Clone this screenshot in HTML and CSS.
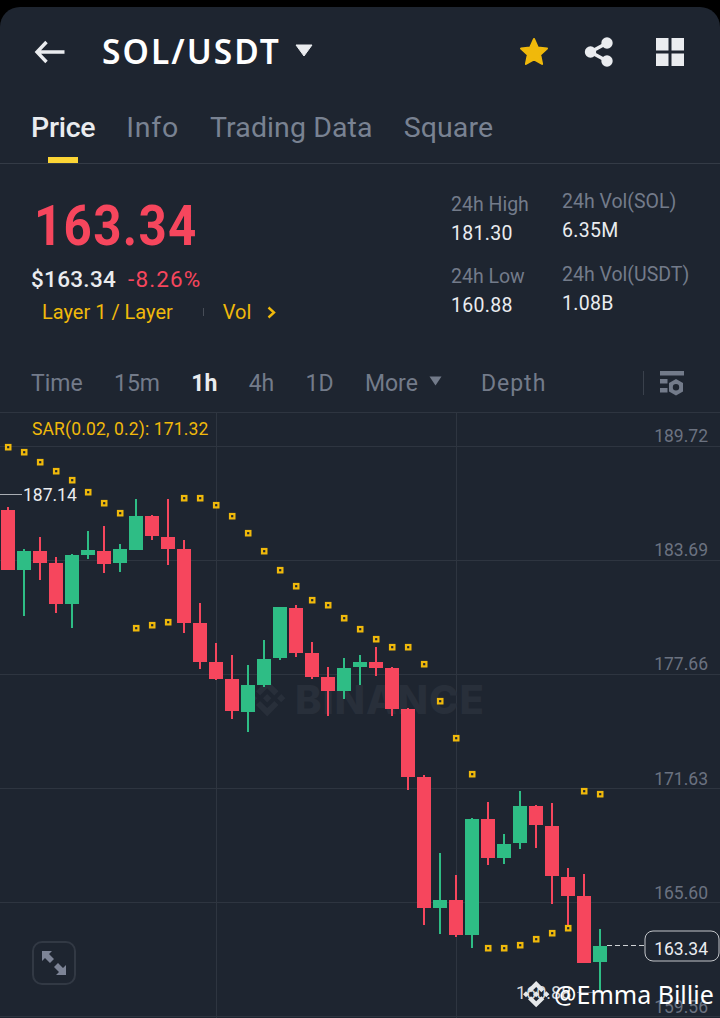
FILE: index.html
```html
<!DOCTYPE html>
<html lang="en">
<head>
<meta charset="utf-8">
<title>SOL/USDT</title>
<link rel="stylesheet" href="styles.css">
</head>
<body>
<main class="app">
  <header class="topbar">
    <svg class="icon-back" viewBox="0 0 32 24"><path d="M30.500 12H4M12.500 2 3 12l9.500 10"/></svg>
    <h1 class="pair">SOL/USDT</h1>
    <svg class="icon-caret" viewBox="0 0 18 13"><path d="M1 1h16L9 12z"/></svg>
    <div class="actions">
      <svg class="icon-star" viewBox="0 0 30 30"><path d="M15 2l3.900 8.600 9.100 1-6.800 6.200 1.900 9.200-8.100-4.700L6.900 27l1.900-9.200L2 11.600l9.100-1z"/></svg>
      <svg class="icon-share" viewBox="0 0 30 30"><path class="share-lines" d="M23 6 6.500 15 23 24"/><circle cx="23" cy="6" r="5.700"/><circle cx="6.500" cy="15" r="5.700"/><circle cx="23" cy="24" r="5.700"/></svg>
      <svg class="icon-grid" viewBox="0 0 28 28"><rect x="0" y="0" width="12.500" height="12.500"/><rect x="15.500" y="0" width="12.500" height="12.500"/><rect x="0" y="15.500" width="12.500" height="12.500"/><rect x="15.500" y="15.500" width="12.500" height="12.500"/></svg>
    </div>
  </header>

  <nav class="tabs">
    <a class="tab tab-active">Price</a>
    <a class="tab tab-info">Info</a>
    <a class="tab">Trading Data</a>
    <a class="tab">Square</a>
  </nav>

  <section class="summary">
    <div class="quote">
      <div class="last">163.34</div>
      <div class="fiat"><span class="fiat-value">$163.34</span><span class="change">-8.26%</span></div>
      <div class="tags">
        <span>Layer 1 / Layer</span>
        <i class="tag-sep"></i>
        <span>Vol</span>
        <svg class="icon-chev" viewBox="0 0 9 13"><path d="M1.500 1.500 7 6.500l-5.500 5"/></svg>
      </div>
    </div>
    <div class="stats">
      <div class="stat-col stat-col-a">
        <div class="stat"><span class="stat-label">24h High</span><span class="stat-value">181.30</span></div>
        <div class="stat"><span class="stat-label">24h Low</span><span class="stat-value">160.88</span></div>
      </div>
      <div class="stat-col stat-col-b">
        <div class="stat"><span class="stat-label">24h Vol(SOL)</span><span class="stat-value">6.35M</span></div>
        <div class="stat"><span class="stat-label">24h Vol(USDT)</span><span class="stat-value">1.08B</span></div>
      </div>
    </div>
  </section>

  <nav class="intervals">
    <span class="int">Time</span>
    <span class="int">15m</span>
    <span class="int int-1h">1h</span>
    <span class="int">4h</span>
    <span class="int">1D</span>
    <span class="int int-more">More</span>
    <svg class="icon-more" viewBox="0 0 13 10"><path d="M.5.500h12L6.500 9.500z"/></svg>
    <span class="int-depth">Depth</span>
    <i class="int-sep"></i>
    <svg class="icon-settings" viewBox="0 0 24 25"><path d="M0 0h24v4.500H0zM0 8h7.500v4.500H0zM0 17h7.500v4.500H0z"/><path fill-rule="evenodd" d="M16 8l7 4v8.500l-7 4-7-4V12zM16 13a3.200 3.200 0 1 0 0 6.400 3.200 3.200 0 0 0 0-6.400z"/></svg>
  </nav>

  <svg class="chart" viewBox="0 412 720 606">
    <g class="grid">
      <path d="M0 412.500H720M0 446.500H720M0 560.500H720M0 674.500H720M0 788.500H720M0 902.500H720M0 1016.500H720M216.500 412V1018M456.500 412V1018"/>
    </g>

    <g class="mark">
      <path transform="translate(249 680) scale(.29)" d="M38.171 53.203 62.759 28.616l24.6 24.6 14.307-14.307L62.759 0 23.864 38.896zM0 62.759l14.307-14.307 14.307 14.307-14.307 14.307zM38.171 72.315l24.588 24.587 24.6-24.6 14.315 14.293-.008.008-38.907 38.908L23.864 86.616l-.02-.02zM96.886 62.765l14.307-14.307 14.307 14.307-14.307 14.307zM77.269 62.752h.006L62.759 48.236 52.03 58.964l-1.232 1.233-2.543 2.543-.02.02.02.021 14.504 14.503 14.516-14.516.007-.008z"/>
      <text class="mark-text" x="295" y="714">BINANCE</text>
    </g>

    <g class="axis">
      <text x="708" y="441.500">189.72</text>
      <text x="708" y="555.500">183.69</text>
      <text x="708" y="670">177.66</text>
      <text x="708" y="785">171.63</text>
      <text x="708" y="899">165.60</text>
      <text x="708" y="1013">159.56</text>
    </g>

    <text class="sar-label" x="32" y="435">SAR(0.02, 0.2): 171.32</text>

    <path class="hi-line" d="M0 494.500H22"/>
    <text class="hi-label" x="23" y="501">187.14</text>

    <g class="wicks-up">
      <path d="M24 549V616M72 554V628M88 531V559M120 544V572M136 499V550M248 665V732M264 640V687M280 607V660M344 658V699M360 655V685M440 853V934M472 818V948M504 834V864M520 791V849M600 929V990"/>
    </g>
    <g class="wicks-down">
      <path d="M8 507V570M40 537V580M56 557V613M104 526V573M152 515V540M168 499V565M184 540V633M200 603V669M216 643V680M232 655V719M296 605V657M312 642V679M328 667V716M376 647V676M392 667V716M408 708V790M424 775V925M456 875V937M488 802V865M536 805V848M552 803V904M568 868V927M584 874V963"/>
    </g>
    <g class="up">
      <rect x="17" y="551" width="14" height="19"/>
      <rect x="65" y="555" width="14" height="49"/>
      <rect x="81" y="550" width="14" height="5"/>
      <rect x="113" y="549" width="14" height="14"/>
      <rect x="129" y="516" width="14" height="34"/>
      <rect x="241" y="685" width="14" height="27"/>
      <rect x="257" y="659" width="14" height="26"/>
      <rect x="273" y="607" width="14" height="51"/>
      <rect x="337" y="668" width="14" height="23"/>
      <rect x="353" y="662" width="14" height="5"/>
      <rect x="433" y="900" width="14" height="8"/>
      <rect x="465" y="819" width="14" height="116"/>
      <rect x="497" y="844" width="14" height="14"/>
      <rect x="513" y="806" width="14" height="37"/>
      <rect x="593" y="946" width="14" height="16"/>
    </g>
    <g class="down">
      <rect x="1" y="510" width="14" height="60"/>
      <rect x="33" y="551" width="14" height="12"/>
      <rect x="49" y="563" width="14" height="41"/>
      <rect x="97" y="551" width="14" height="13"/>
      <rect x="145" y="516" width="14" height="20"/>
      <rect x="161" y="537" width="14" height="12"/>
      <rect x="177" y="549" width="14" height="74"/>
      <rect x="193" y="623" width="14" height="39"/>
      <rect x="209" y="662" width="14" height="17"/>
      <rect x="225" y="679" width="14" height="32"/>
      <rect x="289" y="608" width="14" height="45"/>
      <rect x="305" y="653" width="14" height="24"/>
      <rect x="321" y="677" width="14" height="14"/>
      <rect x="369" y="662" width="14" height="6"/>
      <rect x="385" y="668" width="14" height="41"/>
      <rect x="401" y="709" width="14" height="68"/>
      <rect x="417" y="777" width="14" height="131"/>
      <rect x="449" y="900" width="14" height="35"/>
      <rect x="481" y="819" width="14" height="39"/>
      <rect x="529" y="806" width="14" height="19"/>
      <rect x="545" y="826" width="14" height="50"/>
      <rect x="561" y="877" width="14" height="19"/>
      <rect x="577" y="896" width="14" height="67"/>
    </g>

    <g class="sar">
      <rect x="6" y="445" width="5" height="5"/><rect x="22" y="450" width="5" height="5"/>
      <rect x="38" y="460" width="5" height="5"/><rect x="54" y="469" width="5" height="5"/>
      <rect x="70" y="478" width="5" height="5"/><rect x="86" y="490" width="5" height="5"/>
      <rect x="102" y="501" width="5" height="5"/><rect x="118" y="511" width="5" height="5"/>
      <rect x="134" y="626" width="5" height="5"/><rect x="150" y="623" width="5" height="5"/>
      <rect x="166" y="620" width="5" height="5"/><rect x="182" y="496" width="5" height="5"/>
      <rect x="198" y="496" width="5" height="5"/><rect x="214" y="503" width="5" height="5"/>
      <rect x="230" y="514" width="5" height="5"/><rect x="246" y="531" width="5" height="5"/>
      <rect x="262" y="549" width="5" height="5"/><rect x="278" y="568" width="5" height="5"/>
      <rect x="294" y="584" width="5" height="5"/><rect x="310" y="598" width="5" height="5"/>
      <rect x="326" y="603" width="5" height="5"/><rect x="342" y="616" width="5" height="5"/>
      <rect x="358" y="627" width="5" height="5"/><rect x="374" y="637" width="5" height="5"/>
      <rect x="390" y="645" width="5" height="5"/><rect x="406" y="645" width="5" height="5"/>
      <rect x="422" y="662" width="5" height="5"/><rect x="438" y="699" width="5" height="5"/>
      <rect x="454" y="736" width="5" height="5"/><rect x="470" y="772" width="5" height="5"/>
      <rect x="486" y="946" width="5" height="5"/><rect x="502" y="946" width="5" height="5"/>
      <rect x="518" y="943" width="5" height="5"/><rect x="534" y="937" width="5" height="5"/>
      <rect x="550" y="931" width="5" height="5"/><rect x="566" y="926" width="5" height="5"/>
      <rect x="582" y="789" width="5" height="5"/><rect x="598" y="792" width="5" height="5"/>
    </g>

    <path class="last-dash" d="M607 945.500H645"/>
    <rect class="last-tag" x="645" y="931" width="74" height="30" rx="8"/>
    <text class="last-text" x="708" y="955">163.34</text>

    <rect class="expand-box" x="33" y="942" width="42" height="42" rx="9"/>
    <path class="expand-head" d="M42 951h10l-3 3 5 5-4 4-5-5-3 3zM66 975H56l3-3-5-5 4-4 5 5 3-3z"/>

    <path class="low-line" d="M577 992.500H600"/>
    <text class="low-label" x="516" y="999">160.88</text>
    <path class="wm-logo" transform="translate(523 981) scale(.21)" d="M38.171 53.203 62.759 28.616l24.6 24.6 14.307-14.307L62.759 0 23.864 38.896zM0 62.759l14.307-14.307 14.307 14.307-14.307 14.307zM38.171 72.315l24.588 24.587 24.6-24.6 14.315 14.293-.008.008-38.907 38.908L23.864 86.616l-.02-.02zM96.886 62.765l14.307-14.307 14.307 14.307-14.307 14.307zM77.269 62.752h.006L62.759 48.236 52.03 58.964l-1.232 1.233-2.543 2.543-.02.02.02.021 14.504 14.503 14.516-14.516.007-.008z"/>
    <text class="wm-text" x="554" y="1004">@Emma Billie</text>
  </svg>
</main>
</body>
</html>
```
FILE: styles.css
```css
* { box-sizing: border-box; }
html, body { margin: 0; padding: 0; background: #000; }
body { height: 1018px; overflow: hidden; font-family: Roboto, "Noto Sans", sans-serif; }

.app {
  margin-top: 7px;
  height: 1011px;
  background: #1e2530;
  border-radius: 20px 20px 0 0;
  display: flex;
  flex-direction: column;
  overflow: hidden;
  color: #eaecef;
}

/* top bar */
.topbar { height: 89px; display: flex; align-items: center; padding: 0 36px 0 34px; flex: none; }
.icon-back { width: 32px; height: 24px; fill: none; stroke: #eaecef; stroke-width: 3.4; flex: none; }
.pair { margin: 0 0 0 36px; font-family: "Noto Sans", sans-serif; font-size: 33.500px; font-weight: 600; letter-spacing: 2.050px; color: #fff; line-height: 1; }
.icon-caret { width: 18px; height: 13px; margin: -3px 0 0 14px; fill: #eaecef; stroke: #eaecef; stroke-width: 1; stroke-linejoin: round; flex: none; }
.actions { margin-left: auto; display: flex; align-items: center; gap: 35px; }
.icon-star { width: 30px; height: 30px; fill: #f0b90b; stroke: #f0b90b; stroke-width: 2; stroke-linejoin: round; }
.icon-share { width: 30px; height: 30px; fill: #eaecef; }
.share-lines { fill: none; stroke: #eaecef; stroke-width: 3.500; }
.icon-grid { width: 28px; height: 28px; margin-left: 7px; fill: #eaecef; }

/* tabs */
.tabs { height: 68px; display: flex; gap: 31px; padding: 15px 0 0 31px; border-bottom: 1px solid #343b46; flex: none; }
.tab { font-size: 28.500px; line-height: 34px; color: #798292; position: relative; letter-spacing: .1px; }
.tab-active { color: #eaecef; font-weight: 500; letter-spacing: -.3px; }
.tab-info { letter-spacing: .8px; }
.tab-active::after { content: ""; position: absolute; left: 17px; width: 30px; height: 6px; top: 46px; background: #fcd535; }

/* summary */
.summary { height: 186px; display: flex; flex: none; padding: 0 0 0 31px; }
.quote { flex: none; width: 420px; display: flex; flex-direction: column; }
.last { font-size: 56px; line-height: 60px; margin: 32px 0 0 3px; font-weight: 700; letter-spacing: 1.500px; color: #f6465d; transform: scaleX(.88); transform-origin: left center; }
.fiat { display: flex; gap: 12px; margin-top: 10px; font-size: 22.500px; line-height: 26px; letter-spacing: .3px; }
.fiat-value { color: #eaecef; font-weight: 500; }
.change { color: #f6465d; letter-spacing: 1.100px; }
.tags { display: flex; align-items: center; margin: 8px 0 0 11px; font-size: 20px; line-height: 24px; color: #f0b90b; }
.tag-sep { width: 1px; height: 8px; background: #474d57; margin: 0 19px 0 30px; }
.icon-chev { width: 9px; height: 13px; margin-left: 16px; fill: none; stroke: #f0b90b; stroke-width: 2.400; }

.stats { display: flex; }
.stat-col { display: flex; flex-direction: column; gap: 16px; }
.stat-col-a { width: 111px; margin-top: 28px; }
.stat-col-b { margin-top: 25px; gap: 17px; }
.stat { display: flex; flex-direction: column; height: 56px; }
.stat-label { font-size: 19.500px; line-height: 26px; color: #737b8a; }
.stat-value { font-size: 19.500px; line-height: 30px; margin-top: 1px; color: #eaecef; letter-spacing: .3px; }

/* intervals */
.intervals { height: 62px; display: flex; align-items: center; flex: none; padding: 4px 0 0 31px; font-size: 23px; color: #737b8a; }
.int { margin-right: 31.300px; }
.int-1h { color: #eaecef; font-weight: 700; }
.int-more { margin-right: 11px; }
.icon-more { width: 13px; height: 10px; margin: -4px 39px 0 0; fill: #737b8a; }
.int-depth { letter-spacing: 1px; }
.int-sep { width: 1px; height: 24px; background: #3a414c; margin-left: 97px; }
.icon-settings { width: 24px; height: 25px; margin-left: 16px; fill: #737b8a; }

/* chart */
.chart { display: block; width: 720px; height: 606px; flex: none; }
.grid path { fill: none; stroke: #2e3540; stroke-width: 1; }
.mark path { fill: #282f3a; }
.mark-text { font-family: Inter, sans-serif; font-size: 40px; font-weight: 800; letter-spacing: .8px; fill: #282f3a; }
.axis text { font-size: 17.500px; fill: #6b7280; text-anchor: end; }
.sar-label { font-size: 17.500px; fill: #f0b90b; letter-spacing: .15px; }
.hi-line { stroke: #a9adb3; stroke-width: 1; fill: none; }
.hi-label { font-size: 17.500px; fill: #eaecef; }
.up rect { fill: #2ebd85; }
.down rect { fill: #f6465d; }
.wicks-up path { stroke: #2ebd85; stroke-width: 2; fill: none; }
.wicks-down path { stroke: #f6465d; stroke-width: 2; fill: none; }
.sar rect { width: 4.400px; height: 4.400px; fill: #1e2530; stroke: #f0b90b; stroke-width: 2.200; }
.last-dash { stroke: #d0d3d6; stroke-width: 1; stroke-dasharray: 5 3; fill: none; }
.last-tag { fill: #1e2530; stroke: #c3c6ca; stroke-width: 1; }
.last-text { font-size: 17.500px; fill: #eaecef; text-anchor: end; }
.expand-box { fill: none; stroke: #323944; stroke-width: 2; }
.expand-head { fill: #7d8496; }
.low-line { stroke: #6b7280; stroke-width: 1; fill: none; }
.low-label { font-size: 18px; fill: #d5d8dc; }
.wm-logo { fill: #e6e8ea; }
.wm-text { font-family: "Noto Sans", sans-serif; font-size: 25px; fill: #fff; }
```
